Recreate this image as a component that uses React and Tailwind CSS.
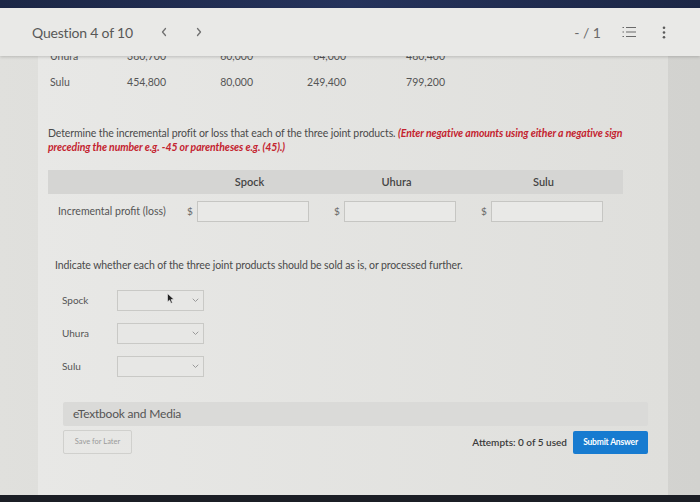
import React from "react";

const font = { fontFamily: "Lato, 'Open Sans', 'Liberation Sans', sans-serif" };

function Chevron({ dir }) {
  return (
    <svg width="8" height="10" viewBox="0 0 8 10" fill="none" stroke="#707070" strokeWidth="1.3" strokeLinecap="round" strokeLinejoin="round">
      {dir === "left" ? <path d="M5.5 1.5 L2.5 5 L5.5 8.5" /> : <path d="M2.5 1.5 L5.5 5 L2.5 8.5" />}
    </svg>
  );
}

function ListIcon() {
  return (
    <svg width="15" height="12" viewBox="0 0 15 12" fill="none" stroke="#6a6a6a" strokeWidth="1.2">
      <path d="M0.5 1.5 H2 M0.5 6 H2 M0.5 10.5 H2" />
      <path d="M4 1.5 H14 M4 6 H14 M4 10.5 H14" />
    </svg>
  );
}

function Dots() {
  return (
    <svg width="4" height="13" viewBox="0 0 4 13" fill="#5a5a5a">
      <circle cx="2" cy="1.8" r="1.3" />
      <circle cx="2" cy="6.5" r="1.3" />
      <circle cx="2" cy="11.2" r="1.3" />
    </svg>
  );
}

function SmallChevronDown() {
  return (
    <svg width="7" height="5" viewBox="0 0 7 5" fill="none" stroke="#9a9a9a" strokeWidth="1" strokeLinecap="round">
      <path d="M1 1 L3.5 3.5 L6 1" />
    </svg>
  );
}

function Cursor() {
  return (
    <svg width="8" height="11" viewBox="0 0 8 11">
      <path d="M0.5 0.5 L0.5 9 L2.6 7 L4 10.3 L5.4 9.7 L4.1 6.5 L7 6.5 Z" fill="#222" stroke="#eee" strokeWidth="0.6" />
    </svg>
  );
}

function Select({ cursor }) {
  return (
    <div className="relative w-[87px] h-[21px] border border-[#c9c9c6] bg-[#e7e7e5] flex items-center justify-end pr-[4px]">
      <SmallChevronDown />
      {cursor && (
        <div className="absolute left-[49px] top-[2px]">
          <Cursor />
        </div>
      )}
    </div>
  );
}

function MoneyCell() {
  return (
    <div className="w-[147px] flex items-center">
      <span className="w-[21px] pl-[11px] text-[10px] text-[#666]">$</span>
      <div className="w-[112px] h-[21px] border border-[#c6c6c3] bg-[#e9e9e7]" />
    </div>
  );
}

function DataRow({ cells, className }) {
  return (
    <div className={`flex items-center h-[14px] text-[10.5px] text-[#555] ${className}`}>
      <span className="w-[70px] pl-[2px]">{cells[0]}</span>
      <span className="w-[48px] text-right">{cells[1]}</span>
      <span className="w-[87px] text-right">{cells[2]}</span>
      <span className="w-[93px] text-right">{cells[3]}</span>
      <span className="w-[99px] text-right">{cells[4]}</span>
    </div>
  );
}

export default function App() {
  const products = ["Spock", "Uhura", "Sulu"];
  return (
    <div className="w-[700px] h-[502px] flex flex-col overflow-hidden bg-linear-to-r from-[#e0e0dd] to-[#d2d2cf]" style={font}>
      {/* top window strip */}
      <div className="h-[8px] shrink-0 bg-linear-to-r from-[#1c2746] via-[#25335c] to-[#1c2746]" />

      {/* question header */}
      <div className="relative z-10 h-[48px] shrink-0 flex items-center bg-[#e9e9e7] shadow-[0_1px_3px_rgba(0,0,0,0.18)] pl-[32px] pr-[34px]">
        <span className="text-[14px] text-[#585858] tracking-[-0.2px]">Question 4 of 10</span>
        <span className="ml-[27px]"><Chevron dir="left" /></span>
        <span className="ml-[27px]"><Chevron dir="right" /></span>
        <div className="flex-1" />
        <span className="text-[14px] text-[#6a6a6a]">- / 1</span>
        <span className="ml-[21px]"><ListIcon /></span>
        <span className="ml-[25px]"><Dots /></span>
      </div>

      <div className="flex-1 flex min-h-0">
        <div className="w-[38px] shrink-0" />
        <div className="w-[630px] flex flex-col bg-linear-to-r from-[#e8e8e6] to-[#dfdfdc] pl-[10px]">
          {/* partially scrolled table rows */}
          <div className="h-[6px] overflow-hidden">
            <DataRow className="-mt-[6px]" cells={["Uhura", "380,700", "60,000", "64,000", "480,400"]} />
          </div>
          <DataRow className="mt-[14px]" cells={["Sulu", "454,800", "80,000", "249,400", "799,200"]} />

          <p className="mt-[36px] text-[10.5px] leading-[14px] text-[#4a4a4a] tracking-[-0.1px]">
            Determine the incremental profit or loss that each of the three joint products.{" "}
            <span className="italic font-bold text-[#c4232f]">
              (Enter negative amounts using either a negative sign
              <br />
              preceding the number e.g. -45 or parentheses e.g. (45).)
            </span>
          </p>

          {/* incremental profit table */}
          <div className="mt-[16px] w-[575px] h-[24px] flex items-center bg-[#d5d5d3]">
            <div className="w-[128px]" />
            {products.map((p) => (
              <div key={p} className="w-[147px] text-center text-[11px] font-semibold text-[#444]">{p}</div>
            ))}
          </div>
          <div className="mt-[7px] flex items-center h-[21px]">
            <div className="w-[128px] pl-[10px] text-[10.5px] text-[#555] whitespace-nowrap">Incremental profit (loss)</div>
            <MoneyCell />
            <MoneyCell />
            <MoneyCell />
          </div>

          <p className="mt-[36px] pl-[7px] text-[10.5px] leading-[14px] text-[#4a4a4a] tracking-[-0.1px]">
            Indicate whether each of the three joint products should be sold as is, or processed further.
          </p>

          <div className="mt-[18px] flex flex-col gap-[12px] pl-[14px]">
            {products.map((p, i) => (
              <div key={p} className="flex items-center">
                <span className="w-[55px] text-[10px] text-[#555]">{p}</span>
                <Select cursor={i === 0} />
              </div>
            ))}
          </div>

          <div className="mt-[25px] ml-[15px] w-[585px] h-[24px] flex items-center bg-[#dadad8] rounded-[2px] pl-[10px]">
            <span className="text-[12px] text-[#555] tracking-[-0.2px]">eTextbook and Media</span>
          </div>

          <div className="mt-[4px] ml-[15px] w-[585px] flex items-center">
            <div className="w-[69px] h-[24px] border border-[#d0d0cd] rounded-[2px] flex items-center justify-center">
              <span className="text-[7.5px] text-[#9a9a9a]">Save for Later</span>
            </div>
            <div className="flex-1" />
            <span className="text-[10px] font-semibold text-[#3a3a3a]">Attempts: 0 of 5 used</span>
            <div className="ml-[6px] w-[75px] h-[23px] rounded-[2px] bg-[#177bd0] flex items-center justify-center">
              <span className="text-[8.5px] font-bold text-white tracking-[-0.2px]">Submit Answer</span>
            </div>
          </div>
        </div>
      </div>

      {/* bottom window edge */}
      <div className="h-[7px] shrink-0 bg-[#1b1e25]" />
    </div>
  );
}
